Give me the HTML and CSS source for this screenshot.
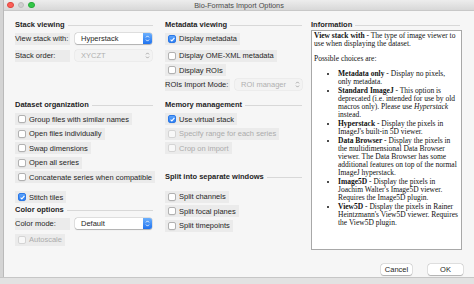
FILE: index.html
```html
<!doctype html>
<html>
<head>
<meta charset="utf-8">
<title>Bio-Formats Import Options</title>
<link rel="stylesheet" href="styles.css">
</head>
<body>
<div class="desk">
<div class="win">
	<div class="titlebar">
		<div class="lights"><span class="light red"></span><span class="light grey"></span><span class="light green"></span></div>
		<div class="title">Bio-Formats Import Options</div>
		<div></div>
	</div>

	<div class="panel">
		<!-- left column -->
		<div class="col">
			<div class="sec">Stack viewing</div>
			<div class="row field"><span class="lbl">View stack with:</span><span class="combo">Hyperstack<i class="step"><svg viewBox="0 0 9 11"><path d="M3 4.4 4.5 2.9 6 4.4M3 6.6 4.5 8.1 6 6.6"/></svg></i></span></div>
			<div class="row field gap5"><span class="lbl">Stack order:</span><span class="combo dis">XYCZT<i class="step"><svg viewBox="0 0 9 11"><path d="M3 4.4 4.5 2.9 6 4.4M3 6.6 4.5 8.1 6 6.6"/></svg></i></span></div>

			<div class="sec gap37">Dataset organization</div>
			<div class="row check"><span class="box"></span>Group files with similar names</div>
			<div class="row check"><span class="box"></span>Open files individually</div>
			<div class="row check"><span class="box"></span>Swap dimensions</div>
			<div class="row check"><span class="box"></span>Open all series</div>
			<div class="row check"><span class="box"></span>Concatenate series when compatible</div>
			<div class="row check gap8"><span class="box on"><svg viewBox="0 0 8 8"><path d="M1.8 4.1 3.3 5.7 6.2 2.2"/></svg></span>Stitch tiles</div>

			<div class="sec">Color options</div>
			<div class="row field"><span class="lbl">Color mode:</span><span class="combo">Default<i class="step"><svg viewBox="0 0 9 11"><path d="M3 4.4 4.5 2.9 6 4.4M3 6.6 4.5 8.1 6 6.6"/></svg></i></span></div>
			<div class="row check off gap4"><span class="box"></span>Autoscale</div>
		</div>

		<!-- middle column -->
		<div class="col">
			<div class="sec">Metadata viewing</div>
			<div class="row check"><span class="box on"><svg viewBox="0 0 8 8"><path d="M1.8 4.1 3.3 5.7 6.2 2.2"/></svg></span>Display metadata</div>
			<div class="row check gap5"><span class="box"></span>Display OME-XML metadata</div>
			<div class="row check"><span class="box"></span>Display ROIs</div>
			<div class="row field"><span class="lbl wide">ROIs Import Mode:</span><span class="combo dis short">ROI manager<i class="step"><svg viewBox="0 0 9 11"><path d="M3 4.4 4.5 2.9 6 4.4M3 6.6 4.5 8.1 6 6.6"/></svg></i></span></div>

			<div class="sec gap8">Memory management</div>
			<div class="row check"><span class="box on"><svg viewBox="0 0 8 8"><path d="M1.8 4.1 3.3 5.7 6.2 2.2"/></svg></span>Use virtual stack</div>
			<div class="row check off"><span class="box"></span>Specify range for each series</div>
			<div class="row check off"><span class="box"></span>Crop on import</div>

			<div class="sec gap16">Split into separate windows</div>
			<div class="row check gap8"><span class="box"></span>Split channels</div>
			<div class="row check"><span class="box"></span>Split focal planes</div>
			<div class="row check"><span class="box"></span>Split timepoints</div>
		</div>

		<!-- information -->
		<div class="col">
			<div class="sec">Information</div>
			<div class="info">
				<p><b>View stack with</b> - The type of image viewer to use when displaying the dataset.</p>
				<p>Possible choices are:</p>
				<ul>
					<li><b>Metadata only</b> - Display no pixels, only metadata.</li>
					<li><b>Standard ImageJ</b> - This option is deprecated (i.e. intended for use by old macros only). Please use <i>Hyperstack</i> instead.</li>
					<li><b>Hyperstack</b> - Display the pixels in ImageJ's built-in 5D viewer.</li>
					<li><b>Data Browser</b> - Display the pixels in the multidimensional Data Browser viewer. The Data Browser has some additional features on top of the normal ImageJ hyperstack.</li>
					<li><b>Image5D</b> - Display the pixels in Joachim Walter's Image5D viewer. Requires the Image5D plugin.</li>
					<li><b>View5D</b> - Display the pixels in Rainer Heintzmann's View5D viewer. Requires the View5D plugin.</li>
				</ul>
			</div>
		</div>
	</div>

	<div class="buttons">
		<span class="btn cancel">Cancel</span>
		<span class="btn ok">OK</span>
	</div>
</div>
<div class="under"></div>
</div>
</body>
</html>
```

FILE: styles.css
```css
body
{
	margin:0px;
	padding:0px;
	background:#d4d4d4;
	font-family:"Liberation Sans", Arial, sans-serif;
	font-size:7.5px;
	color:#262626;
}
.desk
{
	width:474px;
	height:284px;
	overflow:hidden;
	display:flex;
	flex-direction:column;
}
.win
{
	height:278px;
	margin-left:3px;
	border-left:1px #bababa solid;
	background:#f6f6f6;
	display:flex;
	flex-direction:column;
}
.titlebar
{
	height:11px;
	box-sizing:border-box;
	padding-left:3px;
	border-bottom:1px #c8c8c8 solid;
	background:linear-gradient(#ededed, #d8d8d8);
	display:grid;
	grid-template-columns:1fr auto 1fr;
	align-items:center;
}
.lights
{
	display:flex;
	gap:4px;
}
.light
{
	width:6.5px;
	height:6.5px;
	box-sizing:border-box;
	border-radius:50%;
}
.red
{
	background:#fc5f57;
	border:0.5px #de463f solid;
}
.grey
{
	background:#d0d0d0;
	border:0.5px #bdbdbd solid;
}
.green
{
	background:#33c748;
	border:0.5px #27a93a solid;
}
.title
{
	font-size:7.3px;
	color:#4b4b4b;
	padding-right:3px;
}
.panel
{
	display:grid;
	grid-template-columns:150px 146px 151px;
	padding:7px 0px 0px 11px;
}
.col
{
	display:flex;
	flex-direction:column;
	align-items:flex-start;
}
.sec
{
	height:12px;
	width:138px;
	display:flex;
	align-items:center;
	font-weight:bold;
	color:#1e1e1e;
}
.sec:after
{
	content:"";
	flex:1;
	margin:2px 0px 0px 3px;
	border-top:1px #d8d8d8 solid;
}
.col + .col .sec
{
	width:137px;
}
.col + .col + .col .sec
{
	width:149px;
}
.row
{
	height:12px;
	margin-top:2.5px;
	display:flex;
	align-items:center;
	white-space:nowrap;
}
.sec.gap8, .row.gap8
{
	margin-top:8px;
}
.gap4
{
	margin-top:4px;
}
.gap5
{
	margin-top:5px;
}
.sec.gap16
{
	margin-top:16.5px;
}
.sec.gap37
{
	margin-top:37px;
}
.check
{
	padding:0px 3px;
	gap:3px;
	background:#ebebeb;
}
.box
{
	width:8px;
	height:8px;
	box-sizing:border-box;
	border:0.5px #b1b1b1 solid;
	border-radius:2px;
	background:#fff;
	box-shadow:0px 0.5px 0.5px rgba(0,0,0,0.08);
}
.box svg
{
	display:block;
	width:7px;
	height:7px;
	fill:none;
	stroke:#fff;
	stroke-width:1.3;
}
.box.on
{
	background:linear-gradient(#5aa2fb, #2d7ff3);
	border-color:#2b78e6;
}
.off
{
	color:#ababab;
}
.off .box
{
	border-color:#d4d4d4;
	background:#f8f8f8;
	box-shadow:none;
}
.lbl
{
	width:55px;
	height:12px;
	line-height:12px;
	background:#ebebeb;
}
.lbl.wide
{
	width:65px;
}
.combo
{
	width:77px;
	height:11px;
	margin-left:5px;
	padding-left:6px;
	box-sizing:border-box;
	display:flex;
	align-items:center;
	background:#fff;
	border-radius:2.5px;
	box-shadow:0px 0px 0px 0.5px rgba(0,0,0,0.16), 0px 0.5px 1px rgba(0,0,0,0.22);
}
.combo.short
{
	width:67px;
}
.step
{
	margin-left:auto;
	width:9px;
	height:11px;
	border-radius:0px 2.5px 2.5px 0px;
	background:linear-gradient(#6cb0fd, #1f72ef);
	color:#fff;
}
.step svg
{
	display:block;
	width:9px;
	height:11px;
	fill:none;
	stroke:currentColor;
	stroke-width:0.9;
}
.combo.dis
{
	background:#f3f3f3;
	color:#b0b0b0;
	box-shadow:0px 0px 0px 0.5px rgba(0,0,0,0.08);
}
.combo.dis .step
{
	background:none;
	color:#a0a0a0;
}
.info
{
	width:151px;
	height:220px;
	box-sizing:border-box;
	padding:1px 2px;
	border:1px #a8a8a8 solid;
	background:#fff;
	font-family:"Liberation Serif", "Times New Roman", serif;
	font-size:7.5px;
	line-height:8px;
	color:#111;
}
.info p
{
	margin:0px 0px 7px 0px;
}
.info ul
{
	margin:7px 0px 0px 0px;
	padding-left:24px;
}
.info li + li
{
	margin-top:1px;
}
.buttons
{
	margin-top:14px;
	padding-right:11px;
	display:flex;
	justify-content:flex-end;
	gap:16px;
}
.btn
{
	height:11px;
	line-height:11px;
	text-align:center;
	background:#fff;
	border-radius:2.5px;
	box-shadow:0px 0px 0px 0.5px rgba(0,0,0,0.16), 0px 0.5px 1px rgba(0,0,0,0.22);
}
.cancel
{
	width:31px;
}
.ok
{
	width:35px;
}
.under
{
	height:6px;
	border-top:1px #c6c6c6 solid;
	background:#e2e2e2;
}
```
